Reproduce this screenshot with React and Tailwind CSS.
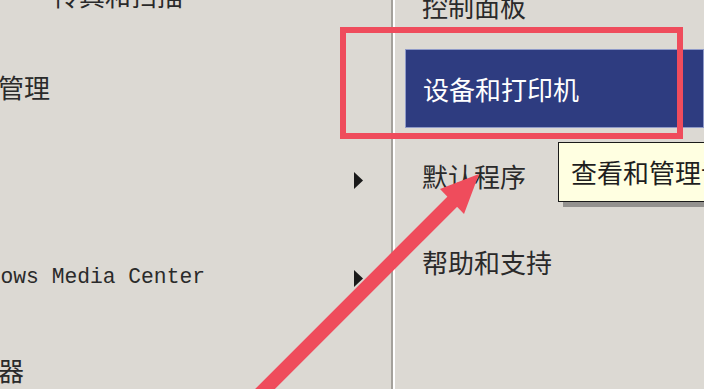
import React from "react";

const cjk = { fontFamily: '"Noto Sans CJK SC", "Noto Sans", sans-serif' };
const mono = { fontFamily: '"Liberation Mono", "Noto Sans CJK SC", monospace' };

function Tri() {
  return (
    <svg width="9" height="17" viewBox="0 0 9 17" className="shrink-0">
      <polygon points="0,0 9,8.5 0,17" fill="#1a1a1a" />
    </svg>
  );
}

export default function App() {
  return (
    <div className="relative w-[704px] h-[389px] overflow-hidden bg-[#dcd9d3] text-[#2a2a2a]">
      <div className="flex h-full">
        {/* left column */}
        <div className="w-[391px] shrink-0 flex flex-col">
          <div className="mt-[-20px] h-[30px] flex items-center">
            <div className="w-[45px] overflow-hidden flex justify-end whitespace-nowrap text-[21.3px] leading-none font-bold" style={mono}>
              Windows
            </div>
            <div className="ml-[8px] text-[26px] leading-none whitespace-nowrap" style={cjk}>传真和扫描</div>
          </div>
          <div className="h-[154px] flex items-center">
            <div className="ml-[-2px] text-[26px] leading-none" style={cjk}>管理</div>
          </div>
          <div className="h-[32px] flex items-center justify-end pr-[28px]">
            <Tri />
          </div>
          <div className="h-[164px] flex items-center justify-between pr-[28px]">
            <div className="w-[205px] overflow-hidden flex justify-end whitespace-nowrap text-[21.3px] leading-none text-[#2a2a2a]" style={mono}>
              Windows Media Center
            </div>
            <Tri />
          </div>
          <div className="h-[20px] flex items-center">
            <div className="ml-[-2px] text-[26px] leading-none" style={cjk}>器</div>
          </div>
        </div>
        {/* separator */}
        <div className="w-[2px] shrink-0 bg-[#a4a19b]" />
        <div className="w-[2px] shrink-0 bg-white" />
        {/* right column */}
        <div className="flex-1 flex flex-col pl-[10px]">
          <div className="mt-[-16px] h-[44px] flex items-center pl-[17px]">
            <div className="text-[26px] leading-none whitespace-nowrap" style={cjk}>控制面板</div>
          </div>
          <div className="mt-[21px] h-[79px] flex items-center pl-[17px] bg-[#2e3c80] border border-[#8f9ac8]">
            <div className="text-[26px] leading-none whitespace-nowrap text-white" style={cjk}>设备和打印机</div>
          </div>
          <div className="h-[96px] flex items-center pl-[17px]">
            <div className="text-[26px] leading-none whitespace-nowrap" style={cjk}>默认程序</div>
          </div>
          <div className="h-[76px] flex items-center pl-[17px]">
            <div className="text-[26px] leading-none whitespace-nowrap" style={cjk}>帮助和支持</div>
          </div>
        </div>
      </div>

      {/* tooltip */}
      <div className="absolute left-[558px] top-[142px] w-[200px] h-[60px] bg-[#ffffe1] border border-[#1a1a1a] shadow-[5px_5px_0_rgba(60,60,60,0.45)] flex items-center pl-[12px]">
        <div className="text-[26px] leading-none whitespace-nowrap text-[#1e1e1e]" style={cjk}>查看和管理设备</div>
      </div>

      {/* red annotations */}
      <svg className="absolute inset-0 pointer-events-none" width="704" height="389" viewBox="0 0 704 389">
        <rect x="343" y="30" width="337" height="106" fill="none" stroke="#ef4c5c" strokeWidth="6" />
        <line x1="258" y1="396" x2="455" y2="199" stroke="#ef4c5c" strokeWidth="14" />
        <polygon points="479,174 440,189 464,214" fill="#ef4c5c" />
      </svg>
    </div>
  );
}
